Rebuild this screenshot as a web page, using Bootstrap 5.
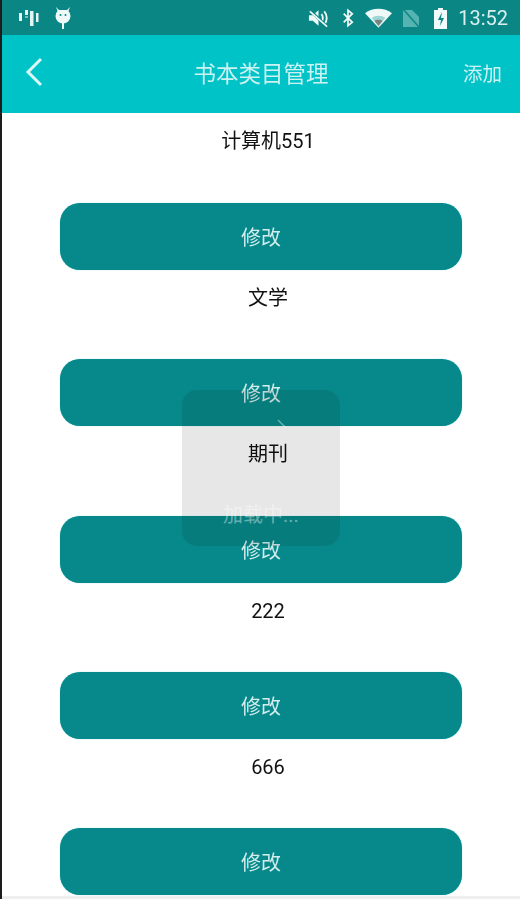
<!DOCTYPE html>
<html lang="zh">
<head>
<meta charset="utf-8">
<title>书本类目管理</title>
<link href="https://cdn.jsdelivr.net/npm/bootstrap@5.3.0/dist/css/bootstrap.min.css" rel="stylesheet">
<style>
html,body{height:899px;overflow:hidden;background:#fff;}
body{font-family:Roboto,"Noto Sans CJK SC",sans-serif;position:relative;}
.edge-wrap{height:899px;border-left:2px solid #1c1c1c;overflow:hidden;}
.soft-focus{filter:blur(.45px);}
.status-strip{height:35px;background:#0a8785;padding:0 12px 0 16px;}
.status-time{font-size:20px;line-height:1;color:#d8efee;margin-left:10px;}
.gap-android{margin-left:15px;}
.gap-bt{margin-left:13px;}
.gap-wifi{margin-left:11px;}
.gap-sim{margin-left:10px;}
.gap-batt{margin-left:13px;}
.head-bar{height:78px;background:#00c3c8;color:#cdf2f2;padding:0 18px 0 22px;position:relative;}
.head-title{font-size:22.5px;position:absolute;left:0;right:0;text-align:center;top:24px;line-height:30px;}
.head-add{font-size:19.500px;line-height:1;margin-top:2px;}
.cat-label{height:90px;padding-top:14px;line-height:28px;font-size:20px;color:#111;text-align:center;padding-left:14px;}
.cat-label.later{height:89.25px;padding-top:14px;}
.cat-btn{display:block;width:402px;height:67px;margin-left:58px;background:#07898b;color:#d3ecec;border:0;border-radius:20px;font-size:20px;line-height:70px;padding:0;box-shadow:0 0 1px #5bcfd2;}
.cat-btn:hover{background:#07898b;color:#d3ecec;}
.loading-box{position:absolute;left:182px;top:390px;width:158px;height:156px;border-radius:15px;background:rgba(0,0,0,.095);text-align:center;}
.loading-text{position:absolute;left:0;right:0;top:111px;font-size:20px;line-height:28px;color:rgba(255,255,255,.4);}
.spin-mark{position:absolute;left:94px;top:28px;}
.foot-strip{position:absolute;left:2px;right:0;bottom:0;height:3px;background:#eeeeee;}
</style>
</head>
<body>
<div class="edge-wrap soft-focus">
  <div class="status-strip d-flex align-items-center justify-content-between">
    <div class="d-flex align-items-center">
      <svg width="22" height="20" viewBox="0 0 22 20" fill="#e3f4f3"><rect x="1" y="5" width="3" height="8"/><rect x="7" y="2" width="3" height="5"/><rect x="7" y="8" width="3" height="2" opacity=".5"/><rect x="12" y="3" width="3.500" height="15"/><rect x="18" y="5" width="2.500" height="9"/></svg>
      <svg class="gap-android" width="16" height="24" viewBox="0 0 16 24" fill="#eef9f8"><path d="M1 1l3 3h8l3-3-1.500 4A7.500 7.500 0 1 1 2.500 5z"/><rect x="7" y="16" width="2" height="7"/><circle cx="5.500" cy="9" r="1" fill="#0a8785"/><circle cx="10.500" cy="9" r="1" fill="#0a8785"/></svg>
    </div>
    <div class="d-flex align-items-center">
      <svg width="21" height="20" viewBox="0 0 22 20"><path d="M1 7h4l6-5v16l-6-5H1z" fill="#eef9f8"/><path d="M14 6c2 2 2 6 0 8M17 3c3.500 4 3.500 10 0 14" stroke="#eef9f8" stroke-width="2" fill="none"/><path d="M2 2l18 17" stroke="#0a8785" stroke-width="3"/><path d="M2 3l18 16" stroke="#eef9f8" stroke-width="1.800"/></svg>
      <svg class="gap-bt" width="12" height="20" viewBox="0 0 14 20"><path d="M2 5l10 10-5 4V1l5 4L2 15" stroke="#eef9f8" stroke-width="2" fill="none"/></svg>
      <svg class="gap-wifi" width="27" height="20" viewBox="0 0 28 20"><path d="M0 5C8-1 20-1 28 5L14 20z" fill="#eef9f8"/><path d="M7 10c4-3 10-3 14 0l-7 9z" fill="#9fd5d3"/><path d="M10 13c2-1.500 6-1.500 8 0l-4 5z" fill="#7a7f7f"/></svg>
      <svg class="gap-sim" width="18" height="20" viewBox="0 0 18 20"><path d="M1 2h9l7 7v10H1z" fill="#55b3b1"/><path d="M1 1l16 18" stroke="#0a8785" stroke-width="1.500"/></svg>
      <svg class="gap-batt" width="15" height="22" viewBox="0 0 15 22"><path d="M1 3h4V1h5v2h4v19H1z" fill="#f2fbfb"/><path d="M9 5l-4 8h3l-1 6 4-8H8z" fill="#0a8785"/></svg>
      <span class="status-time">13:52</span>
    </div>
  </div>
  <div class="head-bar d-flex align-items-center justify-content-between">
    <svg width="20" height="30" viewBox="0 0 20 30" class="mb-1"><path d="M17 2L4 15l13 13" stroke="#d9f7f7" stroke-width="3" fill="none"/></svg>
    <div class="head-title">书本类目管理</div>
    <span class="head-add">添加</span>
  </div>
  <div class="cat-label">计算机551</div>
  <button type="button" class="btn cat-btn">修改</button>
  <div class="cat-label later">文学</div>
  <button type="button" class="btn cat-btn">修改</button>
  <div class="cat-label later">期刊</div>
  <button type="button" class="btn cat-btn">修改</button>
  <div class="cat-label later">222</div>
  <button type="button" class="btn cat-btn">修改</button>
  <div class="cat-label later">666</div>
  <button type="button" class="btn cat-btn">修改</button>
</div>
<div class="loading-box">
  <svg class="spin-mark" width="14" height="14" viewBox="0 0 14 14"><path d="M2 2l8 8" stroke="#fff" stroke-opacity=".4" stroke-width="1.500"/></svg>
  <div class="loading-text">加载中...</div>
</div>
<div class="foot-strip"></div>
<script src="https://cdn.jsdelivr.net/npm/bootstrap@5.3.0/dist/js/bootstrap.bundle.min.js"></script>
</body>
</html>
